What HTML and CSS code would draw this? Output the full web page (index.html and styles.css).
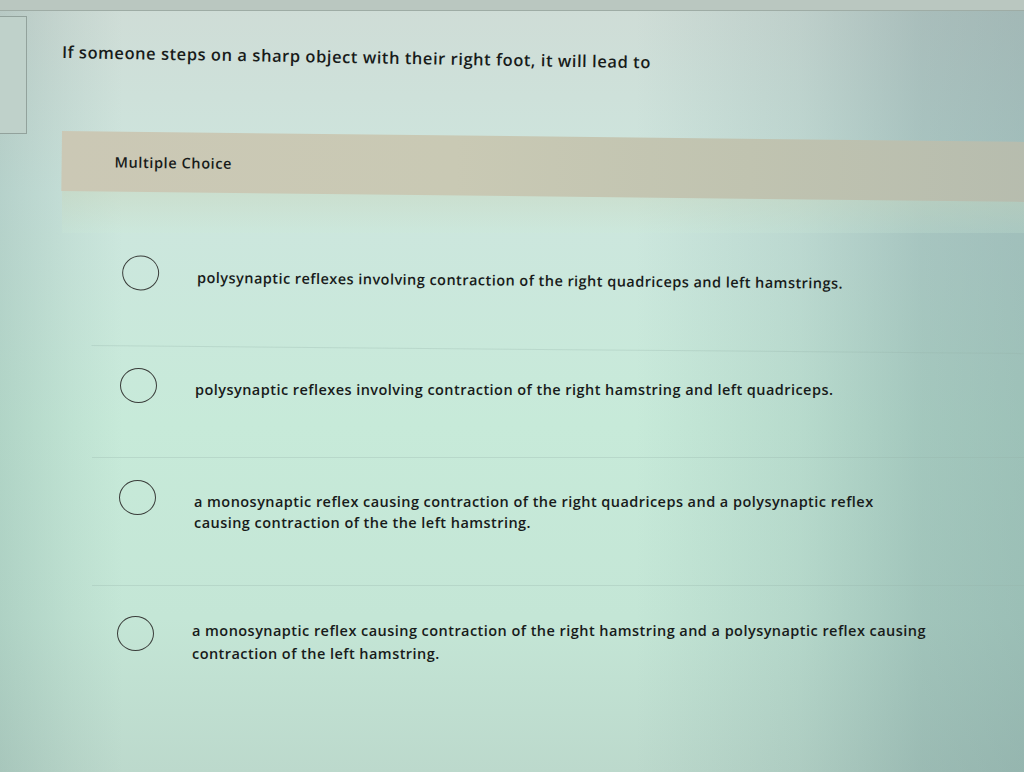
FILE: index.html
```html
<!DOCTYPE html>
<html>
<head>
<meta charset="utf-8">
<link rel="stylesheet" href="styles.css">
</head>
<body>
<div class="screen">
  <div class="topbar"></div>
  <div class="main">
    <div class="side"></div>
    <div class="content">
      <p class="question">If someone steps on a sharp object with their right foot, it will lead to</p>
      <div class="band"><span class="band-label">Multiple Choice</span></div>
      <div class="gap"></div>
      <div class="options">
        <div class="option o1">
          <span class="radio"></span>
          <span class="label">polysynaptic reflexes involving contraction of the right quadriceps and left hamstrings.</span>
        </div>
        <div class="option o2">
          <span class="radio"></span>
          <span class="label">polysynaptic reflexes involving contraction of the right hamstring and left quadriceps.</span>
        </div>
        <div class="option o3">
          <span class="radio"></span>
          <span class="label">a monosynaptic reflex causing contraction of the right quadriceps and a polysynaptic reflex<br>causing contraction of the the left hamstring.</span>
        </div>
        <div class="option o4">
          <span class="radio"></span>
          <span class="label">a monosynaptic reflex causing contraction of the right hamstring and a polysynaptic reflex causing<br>contraction of the left hamstring.</span>
        </div>
      </div>
    </div>
  </div>
</div>
</body>
</html>
```

FILE: styles.css
```css
html, body {
  margin: 0;
  padding: 0;
}
body {
  width: 1024px;
  height: 772px;
  overflow: hidden;
  font-family: "Open Sans", "Lato", sans-serif;
  color: #181b1a;
  background:
    linear-gradient(90deg, rgba(60,100,100,0.16) 0%, rgba(60,100,100,0.06) 7%, rgba(0,0,0,0) 12%, rgba(0,0,0,0) 62%, rgba(70,110,115,0.12) 78%, rgba(60,100,108,0.26) 90%, rgba(60,100,108,0.3) 100%),
    linear-gradient(180deg, #cfdcd6 0%, #cde6de 25%, #c7ead9 55%, #c4e6d6 80%, #bcd9cc 100%);
}
.screen {
  width: 1024px;
  height: 772px;
  display: flex;
  flex-direction: column;
}
.topbar {
  height: 10px;
  background: #bac7c0;
  border-bottom: 1px solid #9eaca5;
  flex: none;
}
.main {
  display: flex;
  flex: 1;
}
.side {
  width: 26px;
  height: 116px;
  margin-top: 5px;
  border: 1px solid #92a29c;
  border-left: none;
  background: #bfd1ca;
  flex: none;
}
.content {
  margin-left: 35px;
  flex: 1;
  display: flex;
  flex-direction: column;
}
.question {
  margin: 32px 0 0 0;
  height: 18px;
  line-height: 18px;
  font-size: 16.5px;
  font-weight: 600;
  letter-spacing: 0.55px;
  transform: rotate(1deg);
  transform-origin: left center;
  white-space: nowrap;
}
.band {
  margin-top: 70px;
  height: 60px;
  background: linear-gradient(90deg, #cbc8b5 0%, #c9c9b4 40%, #c0c3b0 70%, #b6bcae 100%);
  display: flex;
  align-items: center;
  transform: rotate(0.65deg);
  transform-origin: left top;
  margin-right: -20px;
}
.band-label {
  margin-left: 53px;
  font-size: 14.5px;
  font-weight: 600;
  letter-spacing: 0.6px;
}
.gap {
  height: 42px;
  background: linear-gradient(180deg, rgba(200,215,190,0.5), rgba(205,235,215,0.2));
  margin-right: -20px;
}
.options {
  margin-left: 30px;
  display: flex;
  flex-direction: column;
}
.option {
  display: flex;
  align-items: flex-start;
  border-bottom: 1px solid rgba(150,180,170,0.3);
}
.o1 { height: 112px; padding-left: 30px; transform: rotate(0.5deg); transform-origin: left center; }
.o2 { height: 111px; padding-left: 28px; }
.o3 { height: 127px; padding-left: 27px; }
.o4 { height: 150px; padding-left: 25px; border-bottom: none; }
.radio {
  width: 35px;
  height: 33px;
  border: 1.6px solid #3a3d3a;
  border-radius: 50%;
  flex: none;
  margin-top: 22px;
}
.label {
  margin-left: 38px;
  margin-top: 33px;
  font-size: 14.5px;
  font-weight: 600;
  line-height: 22px;
  letter-spacing: 0.45px;
  white-space: nowrap;
}
.o3 .label { line-height: 21px; }
.o4 .label { line-height: 23px; }
.o4 .radio { margin-top: 30px; }
```
